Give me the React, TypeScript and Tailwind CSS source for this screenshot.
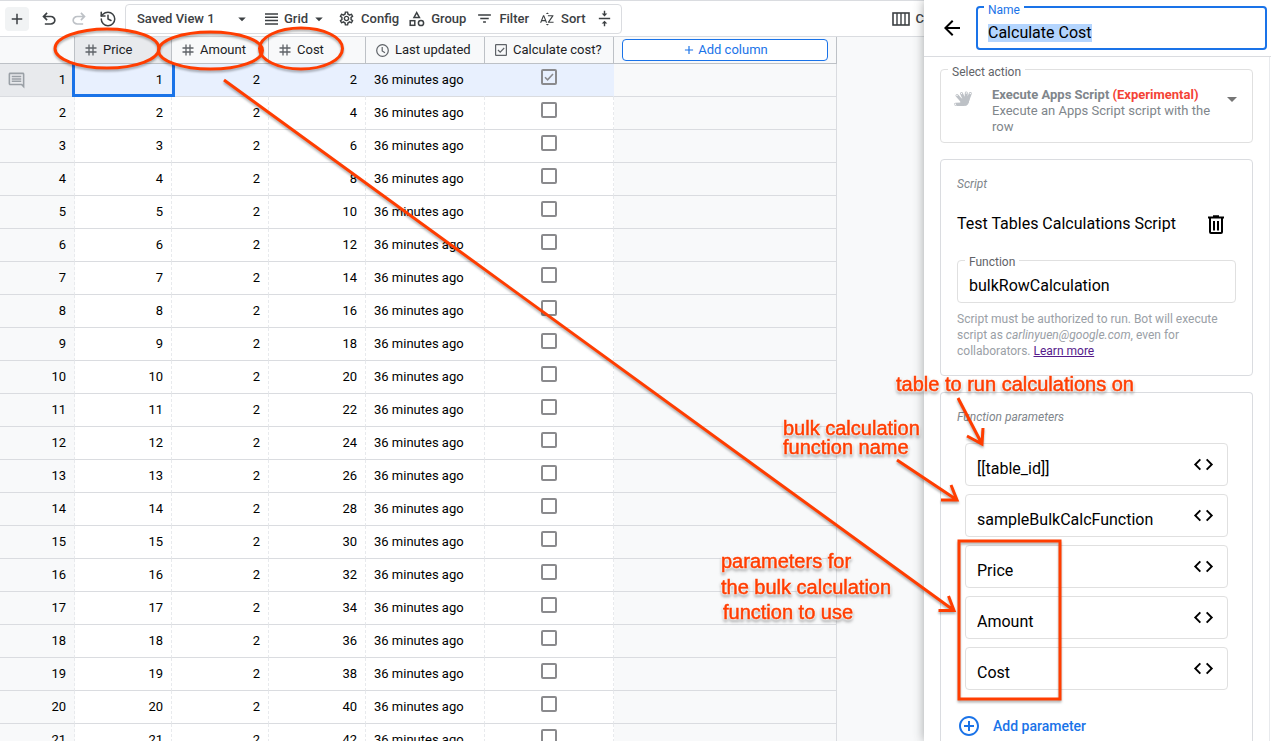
import type { ReactNode } from 'react';
import { History } from 'lucide-react';
import {
  MdAdd,
  MdArrowBack,
  MdArrowDropDown,
  MdCode,
  MdFilterList,
  MdOutlineAddCircleOutline,
  MdOutlineComment,
  MdOutlineSettings,
  MdSortByAlpha,
  MdVerticalAlignCenter,
} from 'react-icons/md';

const ROWS = Array.from({ length: 21 }, (_, i) => i + 1);
const PARAMS = ['[[table_id]]', 'sampleBulkCalcFunction', 'Price', 'Amount', 'Cost'];

// ---- Icons ----

function UndoIcon({ className }: { className?: string }) {
  return (
    <svg width="20" height="20" viewBox="0 0 24 24" fill="currentColor" className={className}>
      <path d="M7 19v-2h7.1q1.575 0 2.7375-1T18 13.5 16.8375 11 14.1 10H7.8l2.6 2.6L9 14 4 9l5-5 1.4 1.4L7.8 8h6.3q2.425 0 4.1625 1.575T20 13.5t-1.7375 3.925T14.1 19Z" />
    </svg>
  );
}

function RowsIcon() {
  return (
    <svg width="13" height="12" viewBox="0 0 13 12" fill="none" stroke="currentColor" strokeWidth="1.5">
      <path d="M0 1h13M0 4.3h13M0 7.6h13M0 11h13" />
    </svg>
  );
}

function ShapesIcon() {
  return (
    <svg width="16" height="16" viewBox="0 0 16 16" fill="none" stroke="currentColor" strokeWidth="1.5">
      <path d="M7.7 1.6 10.4 6.4H5Z" />
      <rect x="1.2" y="9.7" width="4.6" height="4.6" />
      <circle cx="12" cy="12" r="2.6" />
    </svg>
  );
}

function ColumnsIcon() {
  return (
    <svg width="18" height="14" viewBox="0 0 18 14" fill="none" stroke="currentColor">
      <rect x="1" y="1" width="16" height="12" strokeWidth="1.6" />
      <path d="M5 1v12M9 1v12M13 1v12" strokeWidth="1.4" />
    </svg>
  );
}

function HashIcon() {
  return (
    <svg width="12" height="12" viewBox="0 0 12 12" fill="none" stroke="#5f6368" strokeWidth="1.3">
      <path d="M4 .5v11M8 .5v11M.5 4h11M.5 8h11" />
    </svg>
  );
}

function ClockIcon() {
  return (
    <svg width="13" height="13" viewBox="0 0 13 13" fill="none" stroke="#5f6368" strokeWidth="1.2">
      <circle cx="6.5" cy="6.5" r="5.8" />
      <path d="M6.2 3v4l2.8 1.700" />
    </svg>
  );
}

function CheckBoxIcon() {
  return (
    <svg width="12" height="12" viewBox="0 0 12 12" fill="none" stroke="#5f6368" strokeWidth="1.2">
      <rect x=".6" y=".6" width="10.8" height="10.8" rx=".5" />
      <path d="m3 6 2.2 2.2L9.2 4" />
    </svg>
  );
}

function TrashIcon() {
  return (
    <svg width="18" height="20" viewBox="0 0 18 20" fill="none" stroke="currentColor" strokeWidth="2">
      <path d="M1 2.6h16M6 1.2h6" />
      <path d="M3 3v14q0 1 1 1h10q1 0 1-1V3" />
      <path d="M7 6v9.5M11 6v9.5" />
    </svg>
  );
}

function ScriptHandIcon() {
  return (
    <svg width="20" height="16" viewBox="0 0 20 16" fill="#bdc1c6" stroke="#bdc1c6" strokeLinecap="round">
      <path d="M8 9 4 4.5M11 8 8.5 2.5M13 8 13.3 2M14.5 10 17.3 2.5M9 13 2.5 13.3" strokeWidth="3" />
      <path d="M7 8h9l-.8 4q-.7 2.5-3.5 2.5H4l4-3Z" strokeWidth="1" />
      <g fill="#fff" stroke="none">
        <circle cx="2.3" cy="13.3" r=".8" />
        <circle cx="4" cy="4.5" r=".7" />
        <circle cx="8.5" cy="2.5" r=".7" />
        <circle cx="13.3" cy="2" r=".7" />
        <circle cx="17.3" cy="2.5" r=".7" />
      </g>
    </svg>
  );
}

// ---- Toolbar ----

function ToolButton({ icon, label, caret }: { icon?: ReactNode; label: string; caret?: boolean }) {
  return (
    <button type="button" className="flex items-center gap-1.5 whitespace-nowrap">
      {icon}
      {label}
      {caret && <MdArrowDropDown size={18} className="-ml-1" />}
    </button>
  );
}

function Toolbar() {
  return (
    <div className="flex h-[37px] items-center border-y border-[#dadce0] bg-white text-[13px] font-medium text-[#3c4043]">
      <div className="flex w-[125px] shrink-0 items-center gap-2.5 pl-[5px]">
        <button type="button" aria-label="Add row" className="flex size-6 items-center justify-center rounded bg-[#f1f3f4]">
          <MdAdd size={18} />
        </button>
        <button type="button" aria-label="Undo">
          <UndoIcon />
        </button>
        <button type="button" aria-label="Redo" className="text-[#bdc1c6]">
          <UndoIcon className="-scale-x-100" />
        </button>
        <button type="button" aria-label="History">
          <History size={18} strokeWidth={2} />
        </button>
      </div>
      <div className="flex h-[30px] shrink-0 items-center rounded border border-[#dadce0] pl-[11px] pr-2">
        <button type="button" className="flex w-[114px] items-center justify-between">
          Saved View 1
          <MdArrowDropDown size={18} />
        </button>
        <div className="flex items-center gap-2.5 pl-3.5">
          <ToolButton icon={<RowsIcon />} label="Grid" caret />
          <ToolButton icon={<MdOutlineSettings size={17} />} label="Config" />
          <ToolButton icon={<ShapesIcon />} label="Group" />
          <ToolButton icon={<MdFilterList size={17} />} label="Filter" />
          <ToolButton icon={<MdSortByAlpha size={16} />} label="Sort" />
          <button type="button" aria-label="Row height">
            <MdVerticalAlignCenter size={17} />
          </button>
        </div>
      </div>
      <div className="ml-auto">
        <ToolButton icon={<ColumnsIcon />} label="C" />
      </div>
    </div>
  );
}

// ---- Grid ----

function HeadCell({ icon, label, active }: { icon: ReactNode; label: string; active?: boolean }) {
  return (
    <th
      className={`border-r border-b border-[#bdc1c6] p-0 font-normal ${active ? 'bg-[#e8eaed]' : 'bg-[#f8f9fa]'}`}
    >
      <div className="flex items-center gap-1.5 pl-2.5 whitespace-nowrap">
        {icon}
        {label}
      </div>
    </th>
  );
}

function DataRow({ n }: { n: number }) {
  const selected = n === 1;
  const cell = `border-r border-b border-b-[#dadce0] py-0 ${
    selected ? 'border-r-[#e8f0fe] bg-[#e8f0fe]' : 'border-r-[#e8eaed] bg-white [border-right-style:dashed]'
  }`;
  return (
    <tr className="h-[33px]">
      <td
        className={`border-r border-b border-[#dadce0] py-0 pr-2 pl-[7px] ${
          selected ? 'bg-[#e8eaed]' : 'border-r-[#e8eaed] bg-[#f8f9fa] [border-right-style:dashed]'
        }`}
      >
        <div className="flex items-center justify-between">
          {selected ? <MdOutlineComment size={19} className="text-[#9aa0a6]" /> : <span />}
          {n}
        </div>
      </td>
      <td className={`relative pr-2 text-right ${cell}`}>
        {n}
        {selected && <span className="absolute -bottom-px top-0 -left-[3px] -right-1 border-3 border-t-0 border-[#1a73e8]" />}
      </td>
      <td className={`pr-2 text-right ${cell}`}>2</td>
      <td className={`pr-2 text-right ${cell}`}>{n * 2}</td>
      <td className={`pl-2 whitespace-nowrap ${cell}`}>36 minutes ago</td>
      <td className={cell}>
        <div className="relative mx-auto mb-1.5 size-4">
          <input
            type="checkbox"
            aria-label={`Calculate cost, row ${n}`}
            defaultChecked={selected}
            className="block size-4 appearance-none rounded-xs border-2 border-[#8a8a8d]"
          />
          {selected && (
            <svg viewBox="0 0 16 16" className="pointer-events-none absolute inset-0" fill="none" stroke="#8a8a8d" strokeWidth="1.6">
              <path d="m4 8.2 2.6 2.6L12 5" />
            </svg>
          )}
        </div>
      </td>
      <td className="border-r border-b border-[#dadce0] bg-[#f8f9fa]" />
    </tr>
  );
}

function Grid() {
  return (
    <table className="w-[837px] table-fixed border-separate border-spacing-0 text-[13px] leading-4 text-black">
      <colgroup>
        <col className="w-[75px]" />
        <col className="w-[97px]" />
        <col className="w-[97px]" />
        <col className="w-[97px]" />
        <col className="w-[119px]" />
        <col className="w-[129px]" />
        <col />
      </colgroup>
      <thead className="text-[#202124]">
        <tr className="h-[27px]">
          <th className="border-r border-b border-[#bdc1c6] p-0" />
          <HeadCell icon={<HashIcon />} label="Price" active />
          <HeadCell icon={<HashIcon />} label="Amount" />
          <HeadCell icon={<HashIcon />} label="Cost" />
          <HeadCell icon={<ClockIcon />} label="Last updated" />
          <HeadCell icon={<CheckBoxIcon />} label="Calculate cost?" />
          <th className="border-r border-b border-[#bdc1c6] px-2 py-0">
            <button
              type="button"
              className="flex h-[22px] w-full items-center justify-center gap-0.5 rounded border border-[#1a73e8] bg-white font-normal text-[#1a73e8]"
            >
              <MdAdd size={14} />
              Add column
            </button>
          </th>
        </tr>
      </thead>
      <tbody>
        {ROWS.map((n) => (
          <DataRow key={n} n={n} />
        ))}
      </tbody>
    </table>
  );
}

// ---- Side panel ----

function SidePanel() {
  return (
    <aside className="relative flex w-[347px] shrink-0 flex-col bg-white text-black shadow-[0_0_10px_rgba(60,64,67,0.45)]">
      <header className="flex h-[57px] shrink-0 items-center gap-3 border-b border-[#dadce0] pr-1 pl-4">
        <button type="button" aria-label="Back">
          <MdArrowBack size={24} />
        </button>
        <div className="relative flex-1">
          <label htmlFor="name" className="absolute -top-1 left-2 bg-white px-1 text-xs leading-4 text-[#1a73e8]">
            Name
          </label>
          <div className="flex h-11 items-center rounded border-2 border-[#1a73e8] px-2.5 pt-2.5">
            <input
              id="name"
              defaultValue="Calculate Cost"
              className="h-[18px] [field-sizing:content] bg-[#b4d5fe] text-base leading-[18px] outline-none"
            />
          </div>
        </div>
      </header>

      <div className="mr-px flex flex-1 flex-col gap-4 border-r border-[#e8eaed] pt-3 pr-4 pl-4">
        <button
          type="button"
          aria-labelledby="action-label"
          className="relative flex h-[74px] shrink-0 items-start rounded border border-[#e0e0e0] pt-[17px] pr-2 pl-3 text-left"
        >
          <span id="action-label" className="absolute -top-1.5 left-[7px] bg-white px-1 text-xs leading-4 text-[#5f6368]">
            Select action
          </span>
          <span className="mt-1 w-[39px] shrink-0">
            <ScriptHandIcon />
          </span>
          <span className="flex-1 text-[13px] leading-4 text-[#80868b]">
            <b>
              Execute Apps Script <span className="text-[#f44336]">(Experimental)</span>
            </b>
            <br />
            Execute an Apps Script script with the row
          </span>
          <MdArrowDropDown size={24} className="text-[#757575]" />
        </button>

        <section className="h-[217px] shrink-0 rounded border border-[#dadce0] px-4 pt-4">
          <h2 className="text-xs leading-4 text-[#80868b] italic">Script</h2>
          <div className="mt-5 flex h-6 items-center justify-between pr-[11px]">
            <span className="text-base">Test Tables Calculations Script</span>
            <button type="button" aria-label="Remove script" className="pt-0.5">
              <TrashIcon />
            </button>
          </div>
          <div className="relative mt-6">
            <label htmlFor="fn" className="absolute -top-1.5 left-2 bg-white px-1 text-xs leading-4 text-[#5f6368]">
              Function
            </label>
            <input
              id="fn"
              defaultValue="bulkRowCalculation"
              className="block h-[43px] w-full rounded border border-[#e0e0e0] px-[11px] pt-2 text-base outline-none"
            />
          </div>
          <p className="mt-2 text-xs leading-4 text-[#9aa0a6]">
            Script must be authorized to run. Bot will execute script as <i>carlinyuen@google.com</i>, even for
            collaborators.{' '}
            <a href="#learn" className="text-[#551a8b] underline">
              Learn more
            </a>
          </p>
        </section>

        <section className="flex-1 rounded-t border border-b-0 border-[#dadce0] px-4 pt-4">
          <h2 className="text-xs leading-4 text-[#80868b] italic">Function parameters</h2>
          <div className="mt-[18px] flex flex-col gap-2 px-2">
            {PARAMS.map((p) => (
              <div key={p} className="flex h-[43px] items-center rounded border border-[#e0e0e0] pr-3 pl-[11px]">
                <input aria-label={`Parameter ${p}`} defaultValue={p} className="min-w-0 flex-1 pt-2 text-base outline-none" />
                <button type="button" aria-label="Insert variable">
                  <MdCode size={23} />
                </button>
              </div>
            ))}
          </div>
          <button type="button" className="mt-6 flex items-center gap-3 text-sm font-medium text-[#1a73e8]">
            <MdOutlineAddCircleOutline size={24} />
            Add parameter
          </button>
        </section>
      </div>
    </aside>
  );
}

// ---- Hand-drawn notes over the page ----

function Annotations() {
  return (
    <svg className="pointer-events-none absolute inset-0 size-full drop-shadow-[0_2px_1px_rgba(0,0,0,0.3)]">
      <g fill="none" stroke="#ff3d00" strokeWidth="3">
        <ellipse cx="107" cy="48.5" rx="52" ry="19.5" />
        <ellipse cx="210.5" cy="50.5" rx="52" ry="18.5" />
        <ellipse cx="301" cy="48.5" rx="41.5" ry="20.5" />
        <path d="M224 80 954 610.5M948.5 596l5.5 14.5H938.5" />
        <path d="m897 460 60 40M951 485l6 15H941" />
        <path d="m958 398 24 46M983 428l-1 16-15-8" />
        <rect x="959" y="541" width="101" height="158" />
      </g>
      <g
        fill="#ff3d00"
        stroke="#ff3d00"
        strokeWidth="0.5"
        className="[filter:drop-shadow(0_0_1px_#fff)_drop-shadow(0_0_1px_#fff)]"
        fontFamily='"Liberation Sans", Arial, sans-serif'
        fontSize="20"
      >
        <text x="896" y="391">table to run calculations on</text>
        <text x="783" y="435">bulk calculation</text>
        <text x="783" y="454">function name</text>
        <text x="721" y="568">parameters for</text>
        <text x="721" y="594">the bulk calculation</text>
        <text x="723" y="619">function to use</text>
      </g>
    </svg>
  );
}

export default function App() {
  return (
    <div className="relative flex h-screen overflow-hidden bg-[#f8f9fa] font-[Roboto,sans-serif] text-[#202124]">
      <main className="min-w-0 flex-1">
        <Toolbar />
        <Grid />
      </main>
      <SidePanel />
      <Annotations />
    </div>
  );
}
